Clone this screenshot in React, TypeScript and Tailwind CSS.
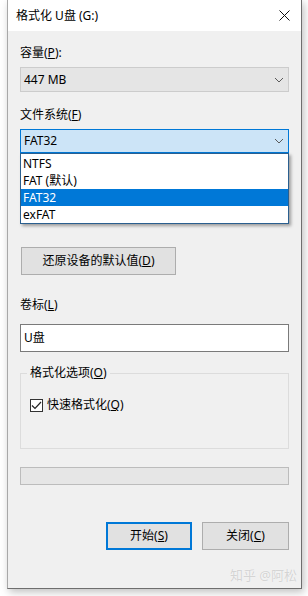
import React from "react";

const font = {
  fontFamily: '"Segoe UI", "Noto Sans", "Noto Sans CJK SC", sans-serif',
};

function Chevron() {
  return (
    <svg width="10" height="6" viewBox="0 0 10 6" className="shrink-0">
      <path d="M1 1 L5 5 L9 1" fill="none" stroke="#5a5a5a" strokeWidth="1" />
    </svg>
  );
}

const options = ["NTFS", "FAT (默认)", "FAT32", "exFAT"];

export default function App() {
  return (
    <div className="w-[308px] h-[596px] bg-white text-[12px] text-black overflow-hidden" style={font}>
      <div className="ml-[7px] w-[295px] h-[589px] bg-[#f0f0f0] border-l border-l-[#a8a8a8] border-r border-r-[#6e6e6e] border-b border-b-[#6e6e6e] shadow-[2px_3px_8px_rgba(0,0,0,0.25)] flex flex-col relative">
        {/* title bar */}
        <div className="h-[31px] bg-white flex items-center justify-between pl-[8px] pr-[11px]">
          <span className="text-[12px] leading-none">格式化 U盘 (G:)</span>
          <svg width="11" height="11" viewBox="0 0 11 11">
            <path d="M0.5 0.5 L10.5 10.5 M10.5 0.5 L0.5 10.5" stroke="#111" strokeWidth="1" />
          </svg>
        </div>

        <div className="px-[12px] flex flex-col">
          <div className="mt-[14px] h-[16px] leading-[16px]">
            容量(<u>P</u>):
          </div>
          <div className="mt-[6px] h-[25px] bg-[#e5e5e5] border border-[#cccccc] flex items-center justify-between pl-[3px] pr-[4px]">
            <span>447 MB</span>
            <Chevron />
          </div>

          <div className="mt-[15px] h-[16px] leading-[16px]">
            文件系统(<u>F</u>)
          </div>
          <div className="relative mt-[6px]">
            <div className="h-[24px] bg-[#cce4f7] border border-[#0078d7] flex items-center justify-between pl-[3px] pr-[4px]">
              <span>FAT32</span>
              <Chevron />
            </div>
            {/* open list */}
            <div className="absolute left-0 right-0 top-[24px] bg-white border border-[#2a5f8f] shadow-[2px_2px_3px_rgba(0,0,0,0.35)] z-10">
              <div className="pt-[1px]">
                {options.map((o) => (
                  <div
                    key={o}
                    className={`h-[17px] leading-[17px] pl-[2px] ${
                      o === "FAT32" ? "bg-[#0078d7] text-white" : ""
                    }`}
                  >
                    {o}
                  </div>
                ))}
              </div>
            </div>
          </div>

          <div className="mt-[94px] ml-[1px] w-[155px] h-[28px] bg-[#e1e1e1] border border-[#adadad] flex items-center justify-center">
            还原设备的默认值(<u>D</u>)
          </div>

          <div className="mt-[22px] h-[16px] leading-[16px]">
            卷标(<u>L</u>)
          </div>
          <div className="mt-[11px] h-[28px] bg-white border border-[#7a7a7a] flex items-center pl-[3px]">
            U盘
          </div>

          <div className="mt-[21px] h-[76px] border border-[#dcdcdc] relative pt-[23px] pl-[9px]">
            <span className="absolute -top-[9px] left-[6px] bg-[#f0f0f0] px-[3px] leading-[16px]">
              格式化选项(<u>O</u>)
            </span>
            <label className="flex items-center gap-[4px]">
              <span className="w-[13px] h-[13px] border border-[#333] bg-white flex items-center justify-center">
                <svg width="11" height="9" viewBox="0 0 11 9">
                  <path d="M1 4.5 L4 7.5 L10 1" fill="none" stroke="#222" strokeWidth="1.2" />
                </svg>
              </span>
              <span className="leading-[16px]">
                快速格式化(<u>Q</u>)
              </span>
            </label>
          </div>

          <div className="mt-[18px] h-[18px] bg-[#e6e6e6] border border-[#bcbcbc]" />

          <div className="mt-[37px] flex justify-end gap-[10px]">
            <div className="w-[86px] h-[28px] bg-[#e1e1e1] border-2 border-[#0078d7] flex items-center justify-center">
              开始(<u>S</u>)
            </div>
            <div className="w-[87px] h-[28px] bg-[#e1e1e1] border border-[#adadad] flex items-center justify-center">
              关闭(<u>C</u>)
            </div>
          </div>
        </div>

        <div className="absolute right-[4px] bottom-[3px] text-[13px] text-[#d4d4d4] [text-shadow:0_0_1px_#fff]">
          知乎 @阿松
        </div>
      </div>
    </div>
  );
}
